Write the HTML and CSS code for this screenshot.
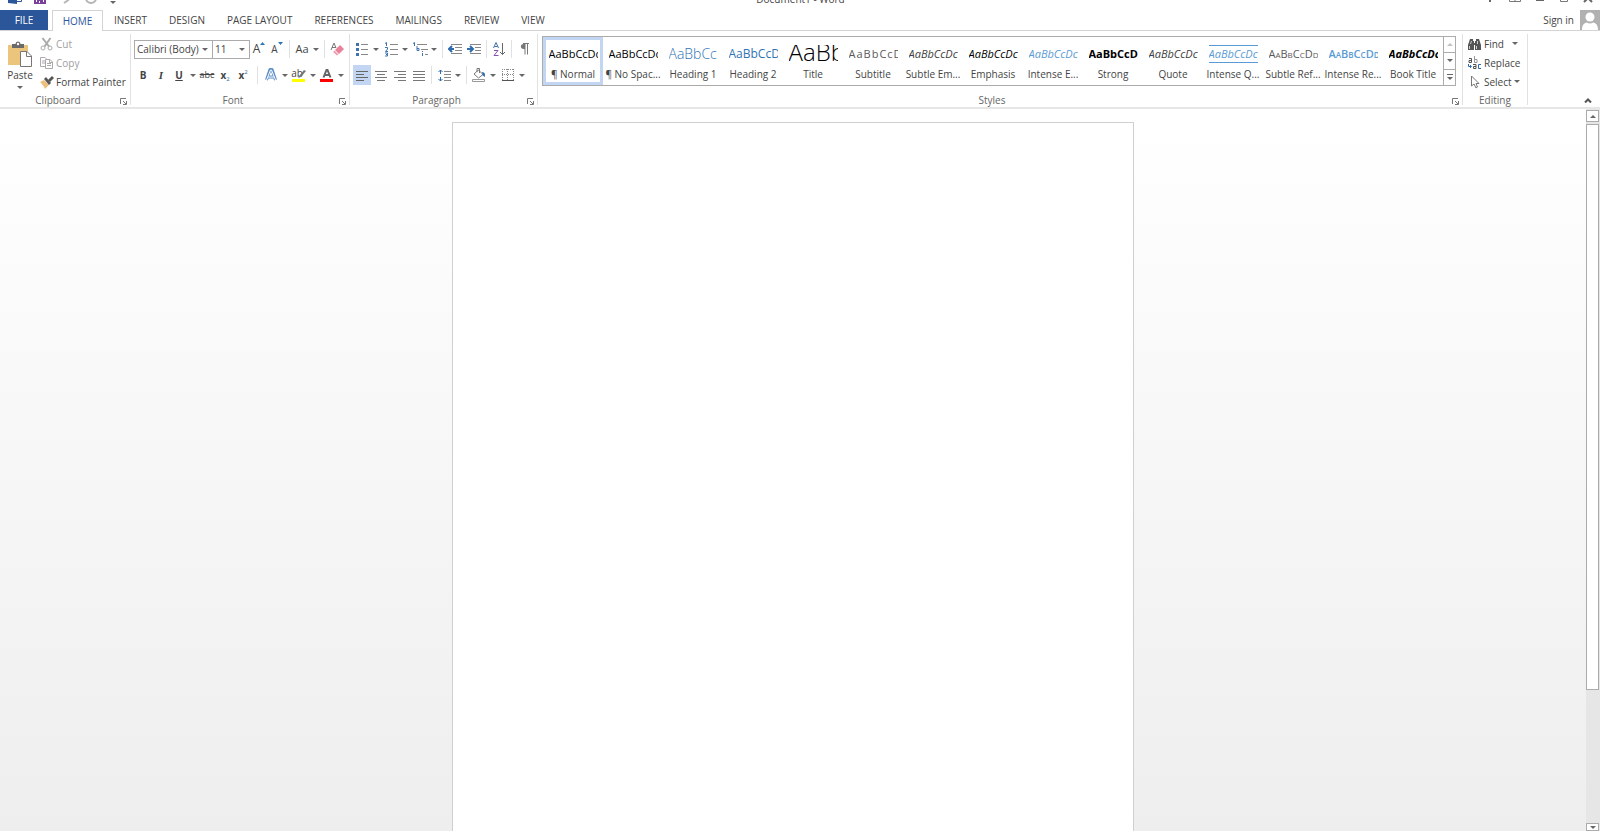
FILE: index.html
```html
<!DOCTYPE html>
<html lang="en">
  <head>
    <meta charset="UTF-8" />
    <meta name="viewport" content="width=device-width, initial-scale=1.0" />
    <title>Document1 - Word</title>
    <link rel="stylesheet" href="styles.css">
  </head>
  <body>
    <header class="titlebar">
      <div class="quick-access">
        <button aria-label="Word"><svg width="14" height="14" viewBox="0 0 14 14"><path d="M0 1L9 0V14L0 13Z" fill="#2b579a"/><path d="M2 4L3.500 10L5 5L6.500 10L8 4" fill="none" stroke="#fff"/><path d="M9 2.500H13.500V11.500H9M10 5H12M10 7H12M10 9H12" fill="none" stroke="#2b579a"/></svg></button>
        <button aria-label="Save"><svg width="12" height="14" viewBox="0 0 12 14"><path d="M1 1H11V13H1Z" fill="#fff" stroke="#7b3fa0" stroke-width="2"/><path d="M3 9H9V13H3Z" fill="#7b3fa0"/><path d="M5 11H6V13H5Z" fill="#fff"/></svg></button>
        <button aria-label="Undo"><svg width="14" height="14" viewBox="0 0 14 14"><path d="M3 4H8C12 4 12 9 9 11L6 13" fill="none" stroke="#b5b5b5" stroke-width="2"/></svg></button>
        <button aria-label="Redo"><svg width="14" height="14" viewBox="0 0 14 14"><circle cx="7" cy="8" r="5" fill="none" stroke="#b5b5b5" stroke-width="2"/></svg></button>
        <button aria-label="Customize"><i class="arrow"></i></button>
      </div>
      <span class="doc-title">Document1 - Word</span>
      <div class="window-buttons">
        <button aria-label="Help"><svg width="10" height="10" viewBox="0 0 10 10"><path d="M4 7H6V9H4Z" fill="#666"/></svg></button>
        <button aria-label="Ribbon Display Options"><svg width="12" height="10" viewBox="0 0 12 10"><path d="M.5 .5H11.500V8.500H.5ZM6 4V8M1 5.500H11" fill="none" stroke="#777"/></svg></button>
        <button aria-label="Minimize"><svg width="10" height="10" viewBox="0 0 10 10"><path d="M1 7H9" stroke="#666" stroke-width="2"/></svg></button>
        <button aria-label="Restore"><svg width="10" height="10" viewBox="0 0 10 10"><path d="M1.500 1.500H8.500V8.500H1.500Z" fill="none" stroke="#777"/></svg></button>
        <button aria-label="Close"><svg width="10" height="10" viewBox="0 0 10 10"><path d="M1 1L9 9M9 1L1 9" stroke="#666" stroke-width="2"/></svg></button>
      </div>
    </header>

    <nav class="tabs">
      <button class="tab file">FILE</button>
      <button class="tab active">HOME</button>
      <button class="tab">INSERT</button>
      <button class="tab">DESIGN</button>
      <button class="tab">PAGE LAYOUT</button>
      <button class="tab">REFERENCES</button>
      <button class="tab">MAILINGS</button>
      <button class="tab">REVIEW</button>
      <button class="tab">VIEW</button>
      <a class="sign-in" href="#">Sign in
        <svg width="20" height="20" viewBox="0 0 20 20"><path d="M0 0H20V20H0Z" fill="#b1b1b1"/><circle cx="10" cy="7" r="4.500" fill="#fff"/><path d="M2 20C2 15 4 13 7 12.500Q10 14.500 13 12.500C16 13 18 15 18 20Z" fill="#fff"/></svg>
      </a>
    </nav>

    <div class="ribbon">
      <!-- Clipboard -->
      <section class="group clipboard">
        <div class="group-body">
          <button class="paste">
            <svg width="24" height="27" viewBox="0 0 24 27"><path d="M0 4H20V24H0Z" fill="#ecc57c"/><path d="M4 3H7.500C7.500 -.5 12.500 -.5 12.500 3H16V7H4Z" fill="#6a6a6a"/><circle cx="10" cy="3" r="1.200" fill="#fff"/><path d="M12.500 10.500H19L23.500 15V25.500H12.500Z" fill="#fff" stroke="#777"/><path d="M18.500 10.500V15.500H23.500" fill="none" stroke="#777"/></svg>
            Paste
            <i class="arrow"></i>
          </button>
          <div class="command-list">
            <button class="command disabled"><svg width="14" height="14" viewBox="0 0 14 14"><path d="M2.500 1L9 9.500M10.500 1L4.500 9.500" fill="none" stroke="#aaa" stroke-width="2"/><circle cx="3" cy="11" r="2" fill="none" stroke="#aaa"/><circle cx="10" cy="11" r="2" fill="none" stroke="#aaa"/></svg>Cut</button>
            <button class="command disabled"><svg width="14" height="14" viewBox="0 0 14 14"><path d="M.5 1.500H5L7.500 4V10.500H.5Z M2 5H5M2 7H5" fill="#fff" stroke="#b0a8b0"/><path d="M5.500 3.500H10L12.500 6V12.500H5.500Z" fill="#fff" stroke="#aaa"/><path d="M7 7.500H11M7 9.500H11M9.500 4V6.500H12" fill="none" stroke="#aaa"/></svg>Copy</button>
            <button class="command"><svg width="14" height="14" viewBox="0 0 14 14"><path d="M0 7L4 5L9 10L5 14C4 11 2 9 0 7Z" fill="#ecc07c"/><path d="M4 4L6 2L11 8L9 10Z" fill="#555"/><path d="M8 5L12 1L14 3L10 7Z" fill="#555"/></svg>Format Painter</button>
          </div>
        </div>
        <footer><span>Clipboard</span><button class="launcher" aria-label="Clipboard settings"><svg width="7" height="7" viewBox="0 0 7 7"><path d="M.5 6V.5H6M3 3L6 6M6.500 3V6.500H3" fill="none" stroke="#777"/></svg></button></footer>
      </section>

      <!-- Font -->
      <section class="group font">
        <div class="group-body rows">
          <div class="row">
            <span class="combo name"><select aria-label="Font"><option>Calibri (Body)</option></select><i class="arrow"></i></span>
            <span class="combo size"><select aria-label="Font size"><option>11</option></select><i class="arrow"></i></span>
            <button class="tool grow" aria-label="Increase font size"><span>A</span><svg width="5" height="3" viewBox="0 0 5 3"><path d="M0 3L2.500 0L5 3Z" fill="#2e75b6"/></svg></button>
            <button class="tool grow small" aria-label="Decrease font size"><span>A</span><svg width="5" height="3" viewBox="0 0 5 3"><path d="M0 0L2.500 3L5 0Z" fill="#2e75b6"/></svg></button>
            <i class="sep"></i>
            <button class="tool drop case" aria-label="Change case"><span>Aa</span><i class="arrow"></i></button>
            <i class="sep"></i>
            <button class="tool" aria-label="Clear formatting"><svg width="14" height="14" viewBox="0 0 14 14"><path d="M1 8L4 1L6 6M2 5.500H6" fill="none" stroke="#777"/><path d="M10 3L14 7L9 12L5 8Z" fill="#e8829b"/><path d="M4.500 8.500L8.500 12.500L7 13.500L3 10Z" fill="#ef9fb1"/></svg></button>
          </div>
          <div class="row">
            <button class="tool"><b>B</b></button>
            <button class="tool italic">I</button>
            <button class="tool drop"><span><u>U</u></span><i class="arrow"></i></button>
            <button class="tool strike">abc</button>
            <button class="tool script"><b>x</b><sub>2</sub></button>
            <button class="tool script"><b>x</b><sup>2</sup></button>
            <i class="sep wide"></i>
            <button class="tool drop" aria-label="Text effects"><span><svg width="12" height="14" viewBox="0 0 12 14"><path d="M1.500 12L5 1.500H7L10.500 12M3 9H9" fill="none" stroke="#5b8fc9" stroke-width="3" stroke-linejoin="round"/><path d="M1.500 12L5.500 2H6.500L10.500 12M3 9H9" fill="none" stroke="#fff"/></svg></span><i class="arrow"></i></button>
            <button class="tool drop marker" aria-label="Highlight color"><span><svg width="14" height="14" viewBox="0 0 14 14"><path d="M0 11H13V14H0Z" fill="#ff0"/><path d="M7 8L12 2L14 3L9 9L6 10Z" fill="#777"/></svg>ab</span><i class="arrow"></i></button>
            <button class="tool drop" aria-label="Font color"><span><svg width="14" height="14" viewBox="0 0 14 14"><path d="M3.500 9.500L6.500 2H7.500L10.500 9.500M5 7H9" fill="none" stroke="#666" stroke-width="2"/><path d="M0 11H13V14H0Z" fill="#f00"/></svg></span><i class="arrow"></i></button>
          </div>
        </div>
        <footer><span>Font</span><button class="launcher" aria-label="Font settings"><svg width="7" height="7" viewBox="0 0 7 7"><path d="M.5 6V.5H6M3 3L6 6M6.500 3V6.500H3" fill="none" stroke="#777"/></svg></button></footer>
      </section>

      <!-- Paragraph -->
      <section class="group paragraph">
        <div class="group-body rows">
          <div class="row spaced">
            <button class="tool drop" aria-label="Bullets"><span><svg width="12" height="14" viewBox="0 0 12 14"><path d="M0 1H3V4H0ZM0 6H3V9H0ZM0 11H3V14H0Z" fill="#3f73ad"/><path d="M5 2.500H12M5 7.500H12M5 12.500H12" stroke="#888"/></svg></span><i class="arrow"></i></button>
            <button class="tool drop" aria-label="Numbering"><span><svg width="13" height="15" viewBox="0 0 13 15"><path d="M0 1.500L1.500 .5V4M0 5.500H2.500V7L.5 9.500H3M0 11H2.500V14H0M1 12.500H2" fill="none" stroke="#3f73ad"/><path d="M5 2.500H13M5 7.500H13M5 12.500H13" stroke="#888"/></svg></span><i class="arrow"></i></button>
            <button class="tool drop" aria-label="Multilevel list"><span><svg width="15" height="14" viewBox="0 0 15 14"><path d="M0 1.500L1.500 .5V4M4 4V8.500H6V6.500H4M9.500 9V10M9.500 11V14" fill="none" stroke="#3f73ad"/><path d="M4 2.500H14M8 7.500H15M12 12.500H15" stroke="#888"/></svg></span><i class="arrow"></i></button>
            <i class="sep"></i>
            <button class="tool" aria-label="Decrease indent"><svg width="14" height="12" viewBox="0 0 14 12"><path d="M3 1.500H14M7 4.500H14M7 7.500H14M3 10.500H14" stroke="#888"/><path d="M6 6H1M4 3L1 6L4 9" fill="none" stroke="#2e6cae" stroke-width="2"/></svg></button>
            <button class="tool" aria-label="Increase indent"><svg width="14" height="12" viewBox="0 0 14 12"><path d="M3 1.500H14M8 4.500H14M8 7.500H14M3 10.500H14" stroke="#888"/><path d="M0 6H5M3 3L6 6L3 9" fill="none" stroke="#2e6cae" stroke-width="2"/></svg></button>
            <i class="sep"></i>
            <button class="tool" aria-label="Sort"><svg width="13" height="14" viewBox="0 0 13 14"><path d="M.5 6L3 .5L5.500 6M1.500 4.500H4.500" fill="none" stroke="#3f73ad"/><path d="M1 8.500H5L1 13.500H5.500" fill="none" stroke="#8a4fae"/><path d="M9.500 1V12.500M7 10L9.500 12.500L12 10" fill="none" stroke="#666"/></svg></button>
            <i class="sep"></i>
            <button class="tool" aria-label="Show marks"><svg width="9" height="12" viewBox="0 0 9 12"><path d="M5 1H3.500C0 1 0 6 3.500 6H5Z" fill="#777"/><path d="M3 .5H9M5 1V11.500M7.500 1V11.500" fill="none" stroke="#777"/></svg></button>
          </div>
          <div class="row spaced">
            <button class="tool pressed" aria-label="Align left"><svg width="12" height="11" viewBox="0 0 12 11"><path d="M0 1.500H12M0 4.500H8M0 7.500H12M0 10.500H8" stroke="#666"/></svg></button>
            <button class="tool" aria-label="Center"><svg width="12" height="11" viewBox="0 0 12 11"><path d="M0 1.500H12M2 4.500H10M0 7.500H12M2 10.500H10" stroke="#777"/></svg></button>
            <button class="tool" aria-label="Align right"><svg width="12" height="11" viewBox="0 0 12 11"><path d="M0 1.500H12M4 4.500H12M0 7.500H12M4 10.500H12" stroke="#777"/></svg></button>
            <button class="tool" aria-label="Justify"><svg width="12" height="11" viewBox="0 0 12 11"><path d="M0 1.500H12M0 4.500H12M0 7.500H12M0 10.500H12" stroke="#777"/></svg></button>
            <i class="sep"></i>
            <button class="tool drop" aria-label="Line spacing"><span><svg width="13" height="13" viewBox="0 0 13 13"><path d="M2.500 1V5M.5 3L2.500 1L4.500 3M2.500 8V12M.5 10L2.500 12L4.500 10" fill="none" stroke="#2e6cae"/><path d="M6 2.500H13M6 5.500H13M6 8.500H13M6 11.500H13" stroke="#888"/></svg></span><i class="arrow"></i></button>
            <i class="sep"></i>
            <button class="tool drop" aria-label="Shading"><span><svg width="14" height="14" viewBox="0 0 14 14"><path d="M2 6L6.500 2L11 6.500L6.500 10Z" fill="#fff" stroke="#777"/><path d="M5 4V.5H7.500V5" fill="none" stroke="#777"/><path d="M10 4C13 4 13.500 7 12.500 9L10.500 7Z" fill="#2e6cae"/><path d="M.5 11.500H12.500V13.500H.5Z" fill="#fff" stroke="#999"/></svg></span><i class="arrow"></i></button>
            <button class="tool drop" aria-label="Borders"><span><svg width="12" height="12" viewBox="0 0 12 12"><path d="M0 .5H12M0 5.500H12M.5 0V12M5.500 0V12M11.500 0V12" fill="none" stroke="#888" stroke-dasharray="1 1"/><path d="M0 11.500H12" stroke="#555"/></svg></span><i class="arrow"></i></button>
          </div>
        </div>
        <footer><span>Paragraph</span><button class="launcher" aria-label="Paragraph settings"><svg width="7" height="7" viewBox="0 0 7 7"><path d="M.5 6V.5H6M3 3L6 6M6.500 3V6.500H3" fill="none" stroke="#777"/></svg></button></footer>
      </section>

      <!-- Styles -->
      <section class="group styles">
        <div class="group-body">
          <div class="gallery">
            <button class="style selected"><span class="preview">AaBbCcDc</span>¶ Normal</button>
            <button class="style"><span class="preview">AaBbCcDc</span>¶ No Spac...</button>
            <button class="style"><span class="preview heading1">AaBbCc</span>Heading 1</button>
            <button class="style"><span class="preview heading2">AaBbCcD</span>Heading 2</button>
            <button class="style"><span class="preview title">AaBb</span>Title</button>
            <button class="style"><span class="preview subtitle">AaBbCcD</span>Subtitle</button>
            <button class="style"><span class="preview slanted">AaBbCcDc</span>Subtle Em...</button>
            <button class="style"><span class="preview emphasis">AaBbCcDc</span>Emphasis</button>
            <button class="style"><span class="preview intense">AaBbCcDc</span>Intense E...</button>
            <button class="style"><span class="preview strong">AaBbCcDc</span>Strong</button>
            <button class="style"><span class="preview slanted">AaBbCcDc</span>Quote</button>
            <button class="style"><span class="preview intense lined">AaBbCcDc</span>Intense Q...</button>
            <button class="style"><span class="preview caps">AaBbCcDd</span>Subtle Ref...</button>
            <button class="style"><span class="preview caps blue">AaBbCcDd</span>Intense Re...</button>
            <button class="style"><span class="preview strong book">AaBbCcDc</span>Book Title</button>
            <div class="gallery-scroll">
              <button class="off" aria-label="Previous styles"><i class="arrow up"></i></button>
              <button aria-label="Next styles"><i class="arrow"></i></button>
              <button class="more" aria-label="More styles"><i class="arrow"></i></button>
            </div>
          </div>
        </div>
        <footer><span>Styles</span><button class="launcher" aria-label="Styles settings"><svg width="7" height="7" viewBox="0 0 7 7"><path d="M.5 6V.5H6M3 3L6 6M6.500 3V6.500H3" fill="none" stroke="#777"/></svg></button></footer>
      </section>

      <!-- Editing -->
      <section class="group editing">
        <div class="group-body">
          <div class="command-list">
            <button class="command"><svg width="14" height="14" viewBox="0 0 14 14"><path d="M2 2H5V4H6V13H0V8ZM8 2H11L13 8V13H7V4H8Z" fill="#555"/><path d="M5 6H8V8H5Z" fill="#555"/><path d="M1.500 9V12M8.500 9V12M3.500 4L2.500 7M9.500 4V7" stroke="#ccc"/></svg>Find<i class="arrow far"></i></button>
            <button class="command"><svg width="14" height="14" viewBox="0 0 14 14"><path d="M1 2.500H3.500V6.500H1V4.500H3.500" fill="none" stroke="#555"/><path d="M6.500 0V6.500H9V3.500H6.500" fill="none" stroke="#999"/><path d="M5 8.500H8V12.500H5.500V10.500H8" fill="none" stroke="#555"/><path d="M13 8.500H10.500V12.500H13M.5 8V10.500H3M2 9L3.500 10.500L2 12" fill="none" stroke="#2e6cae"/></svg>Replace</button>
            <button class="command"><svg width="14" height="14" viewBox="0 0 14 14"><path d="M3.500 1V11L6 9L8 13L9.500 12L8 8.500H11Z" fill="#fff" stroke="#777"/></svg>Select<i class="arrow"></i></button>
          </div>
        </div>
        <footer><span>Editing</span></footer>
      </section>

      <button class="collapse" aria-label="Collapse the ribbon"><svg width="8" height="5" viewBox="0 0 8 5"><path d="M1 4.500L4 1.500L7 4.500" fill="none" stroke="#555" stroke-width="2"/></svg></button>
    </div>

    <main class="workspace">
      <div class="canvas">
        <article class="page"></article>
      </div>
      <div class="scrollbar">
        <button aria-label="Scroll up"><i class="arrow up"></i></button>
        <div class="track"><div class="thumb"></div></div>
        <button aria-label="Scroll down"><i class="arrow"></i></button>
      </div>
    </main>
  </body>
</html>
```
FILE: styles.css
```css
* {
  box-sizing: border-box;
}
body {
  margin: 0;
  height: 100vh;
  display: flex;
  flex-direction: column;
  overflow: hidden;
  background: white;
  color: #444;
  font: 10px/14px "Open Sans", "Noto Sans", sans-serif;
}
button,
select {
  margin: 0;
  padding: 0;
  border: 0;
  background: none;
  color: inherit;
  font: inherit;
}
svg {
  display: block;
  flex: none;
}
.arrow {
  flex: none;
  border: 3px solid transparent;
  border-top-color: #666;
  border-bottom: 0;
}
.arrow.up {
  border-top: 0;
  border-bottom: 3px solid #666;
}

/* title bar, its icons run off the top edge */
.titlebar {
  height: 10px;
  padding: 0 7px 0 8px;
  display: grid;
  grid-template-columns: 1fr auto 1fr;
  grid-template-rows: 4px;
  align-items: end;
}
.quick-access,
.window-buttons {
  display: flex;
  align-items: flex-end;
}
.quick-access {
  gap: 12px;
}
.quick-access .arrow {
  display: block;
}
.window-buttons {
  gap: 14px;
  justify-content: flex-end;
  padding-bottom: 1px;
}
.doc-title {
  line-height: 10px;
}

/* tabs */
.tabs {
  height: 21px;
  display: flex;
  border-bottom: 1px solid #d4d4d4;
}
.tab {
  padding: 0 11px;
}
.tab.file {
  width: 48px;
  margin-right: 4px;
  background: #2b579a;
  color: white;
}
.tab.active {
  width: 51px;
  margin-bottom: -1px;
  padding: 0;
  border: 1px solid #d4d4d4;
  border-bottom: 0;
  background: white;
  color: #2b579a;
}
.sign-in {
  margin-left: auto;
  display: flex;
  align-items: center;
  gap: 6px;
  color: #444;
  text-decoration: none;
}

/* ribbon */
.ribbon {
  height: 78px;
  padding: 3px 0 2px;
  display: flex;
  border-bottom: 2px solid #e6e6e6;
}
.group {
  display: flex;
  flex-direction: column;
  border-right: 1px solid #e1e1e1;
}
.group-body {
  flex: 1;
  display: flex;
}
.group footer {
  position: relative;
  height: 10px;
  line-height: 10px;
  text-align: center;
  color: #666;
}
.launcher {
  position: absolute;
  right: 3px;
  bottom: 0;
}
.clipboard {
  width: 131px;
}
.clipboard footer {
  padding-right: 14px;
}
.font {
  width: 219px;
}
.font footer,
.paragraph footer {
  padding-right: 14px;
}
.paragraph {
  width: 188px;
}
.styles footer {
  padding-right: 16px;
}
.editing {
  width: 65px;
}

.paste {
  width: 40px;
  display: flex;
  flex-direction: column;
  align-items: center;
  justify-content: center;
}
.paste .arrow {
  margin-top: 4px;
}
.command-list {
  display: flex;
  flex-direction: column;
}
.command {
  height: 19px;
  display: flex;
  align-items: center;
  gap: 2px;
}
.command.disabled {
  color: #a0a0a0;
}
.editing .command-list {
  padding-left: 5px;
}
.arrow.far {
  margin-left: 6px;
}

/* tool rows */
.rows {
  flex-direction: column;
  gap: 6px;
  padding: 5px 0 0 3px;
}
.row {
  height: 20px;
  display: flex;
  align-items: center;
}
.row.spaced {
  gap: 1px;
}
.tool {
  position: relative;
  flex: none;
  width: 18px;
  height: 20px;
  display: flex;
  align-items: center;
  justify-content: center;
}
.tool.drop {
  width: 28px;
  justify-content: flex-start;
  gap: 2px;
}
.tool.drop span {
  width: 18px;
  display: flex;
  justify-content: center;
}
.tool.pressed {
  background: #c2d5f2;
}
.sep {
  width: 7px;
  height: 18px;
  background: linear-gradient(#e1e1e1, #e1e1e1) center / 1px 100% no-repeat;
}
.sep.wide {
  width: 10px;
}
.spaced .sep {
  width: 5px;
}
.combo {
  position: relative;
  height: 19px;
  display: flex;
  border: 1px solid #ababab;
}
.combo select {
  width: 100%;
  padding-left: 2px;
  appearance: none;
}
.combo .arrow {
  position: absolute;
  right: 4px;
  top: 7px;
}
.combo.name {
  width: 79px;
}
.combo.size {
  width: 37px;
  border-left: 0;
}
.grow {
  font-size: 12px;
}
.grow.small {
  font-size: 10px;
}
.grow svg {
  align-self: flex-start;
  margin-top: 3px;
}
.case {
  font-size: 11px;
}
.italic {
  font-family: "Liberation Serif", serif;
  font-style: italic;
  font-weight: bold;
  font-size: 11px;
}
.tool u {
  font-weight: bold;
}
.strike {
  font-size: 9px;
  text-decoration: line-through;
}
.script sub,
.script sup {
  font-size: 6px;
  line-height: 6px;
  color: #2e6cae;
}
.script sub {
  align-self: flex-end;
  margin-bottom: 3px;
}
.script sup {
  align-self: flex-start;
  margin-top: 4px;
}
.marker span {
  position: relative;
  height: 14px;
  padding-right: 4px;
  line-height: 10px;
}
.marker svg {
  position: absolute;
  left: 2px;
  top: 0;
}

/* styles gallery */
.styles .group-body {
  padding: 2px 6px 0 4px;
}
.gallery {
  height: 50px;
  display: flex;
  border: 1px solid #ababab;
}
.style {
  width: 60px;
  padding: 5px 0 0;
  display: flex;
  flex-direction: column;
  align-items: center;
  gap: 4px;
  border: 3px solid transparent;
  white-space: nowrap;
}
.style.selected {
  border-color: #c2d5f2;
}
.preview {
  flex: none;
  width: 49px;
  height: 18px;
  font-size: 11px;
  line-height: 18px;
  overflow: hidden;
  text-align: left;
  color: black;
}
.preview.heading1,
.preview.heading2 {
  color: #2e74b5;
  font-size: 14px;
}
.preview.heading2 {
  font-size: 12px;
}
.preview.heading1,
.preview.title {
  font-weight: 300;
}
.preview.title {
  font-size: 24px;
  line-height: 14px;
}
.preview.subtitle {
  color: #5a5a5a;
  letter-spacing: 1px;
}
.preview.slanted {
  color: #404040;
  font-style: italic;
}
.preview.emphasis {
  font-style: italic;
}
.preview.intense {
  color: #5b9bd5;
  font-style: italic;
}
.preview.lined {
  border-top: 1px solid #5b9bd5;
  border-bottom: 1px solid #5b9bd5;
  line-height: 16px;
}
.preview.strong {
  font-weight: bold;
}
.preview.book {
  font-style: italic;
}
.preview.caps {
  color: #5a5a5a;
  font-variant: small-caps;
}
.preview.blue {
  color: #5b9bd5;
  font-weight: 600;
}
.gallery-scroll {
  width: 12px;
  display: flex;
  flex-direction: column;
  border-left: 1px solid #ababab;
}
.gallery-scroll button {
  flex: 1;
  display: flex;
  flex-direction: column;
  align-items: center;
  justify-content: center;
}
.gallery-scroll button + button {
  border-top: 1px solid #ababab;
}
.gallery-scroll .off {
  opacity: 0.4;
}
.gallery-scroll .more::before {
  content: "";
  width: 6px;
  height: 1px;
  margin-bottom: 2px;
  background: #666;
}
.collapse {
  margin-left: auto;
  padding-right: 8px;
  align-self: flex-end;
  height: 10px;
}

/* document area */
.workspace {
  flex: 1;
  min-height: 0;
  display: flex;
  background: linear-gradient(white, #eee);
}
.canvas {
  flex: 1;
  display: flex;
  justify-content: center;
  padding-top: 13px;
}
.page {
  width: 43%;
  background: white;
  border: 1px solid #d0d0d0;
  border-bottom: 0;
}
.scrollbar {
  width: 14px;
  padding: 1px 1px 0 0;
  display: flex;
  flex-direction: column;
  background: #e6e6e6;
}
.scrollbar button {
  height: 12px;
  display: flex;
  align-items: center;
  justify-content: center;
  border: 1px solid #ababab;
  background: white;
}
.scrollbar button:last-child {
  height: 8px;
}
.track {
  flex: 1;
  padding-top: 2px;
}
.thumb {
  height: 81%;
  border: 1px solid #ababab;
  background: white;
}
```
